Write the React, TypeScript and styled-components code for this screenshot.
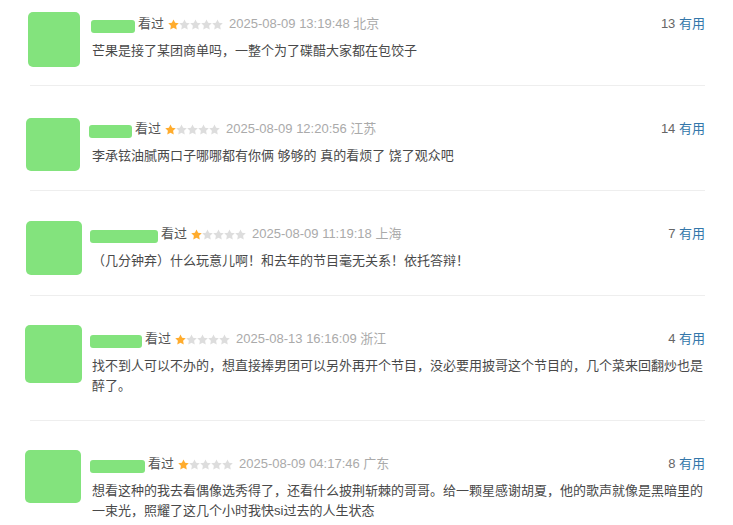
import React from "react";
import styled, { createGlobalStyle } from "styled-components";

const GlobalStyle = createGlobalStyle`
  html, body { margin: 0; padding: 0; background: #fff; }
  body {
    font-family: "Liberation Sans", "Noto Sans CJK SC", sans-serif;
    font-size: 13px;
    color: #494949;
  }
`;

const Page = styled.div`
  padding: 0 28px 0 26px;
`;

const Item = styled.div<{ $first?: boolean }>`
  display: flex;
  align-items: flex-start;
  padding-top: ${(p) => (p.$first ? "14px" : "33px")};
`;

const AvatarSlot = styled.div`
  width: 66px;
  flex-shrink: 0;
`;

const Avatar = styled.div<{ $w: number; $h: number; $dx: number; $dy: number }>`
  width: ${(p) => p.$w}px;
  height: ${(p) => p.$h}px;
  margin-left: ${(p) => p.$dx}px;
  margin-top: ${(p) => p.$dy}px;
  background: #83e37d;
  border-radius: 5px;
`;

const Content = styled.div`
  flex: 1;
  min-width: 0;
  padding-bottom: 24px;
`;

const Header = styled.div`
  display: flex;
  align-items: center;
  height: 20px;
  line-height: 20px;
  white-space: nowrap;
`;

const NameBox = styled.div<{ $w: number; $dx: number }>`
  width: ${(p) => p.$w}px;
  height: 13px;
  margin-left: ${(p) => p.$dx}px;
  margin-right: 3px;
  margin-top: 5px;
  background: #83e37d;
  border-radius: 3px;
  flex-shrink: 0;
`;

const Watched = styled.span`
  color: #555;
`;

const Stars = styled.span`
  display: inline-flex;
  margin-left: 4px;
  margin-right: 6px;
`;

const Time = styled.span`
  color: #aaa;
`;

const Votes = styled.span`
  margin-left: auto;
  color: #666;
`;

const Useful = styled.span`
  color: #3377aa;
`;

const Comment = styled.p`
  margin: 7px 0 0;
  line-height: 20px;
  color: #494949;
`;

const Divider = styled.div`
  height: 1px;
  background: #eeeeee;
  margin-left: 4px;
`;

const Star = ({ on }: { on: boolean }) => (
  <svg width="11" height="11" viewBox="1 1 22 21">
    <path
      d="M12 1.5l3.2 6.6 7.3 1-5.3 5.1 1.3 7.2L12 18l-6.5 3.4 1.3-7.2L1.5 9.1l7.3-1z"
      fill={on ? "#ffac2d" : "#dddddd"}
    />
  </svg>
);

type Review = {
  nameW: number;
  nameDx: number;
  av: { w: number; h: number; dx: number; dy: number };
  time: string;
  place: string;
  votes: number;
  text: string;
};

const reviews: Review[] = [
  {
    nameW: 44,
    nameDx: -1,
    av: { w: 52, h: 55, dx: 2, dy: -2 },
    time: "2025-08-09 13:19:48",
    place: "北京",
    votes: 13,
    text: "芒果是接了某团商单吗，一整个为了碟醋大家都在包饺子",
  },
  {
    nameW: 43,
    nameDx: -3,
    av: { w: 54, h: 53, dx: 0, dy: -1 },
    time: "2025-08-09 12:20:56",
    place: "江苏",
    votes: 14,
    text: "李承铉油腻两口子哪哪都有你俩 够够的 真的看烦了 饶了观众吧",
  },
  {
    nameW: 68,
    nameDx: -2,
    av: { w: 56, h: 54, dx: 0, dy: -3 },
    time: "2025-08-09 11:19:18",
    place: "上海",
    votes: 7,
    text: "（几分钟弃）什么玩意儿啊！和去年的节目毫无关系！依托答辩！",
  },
  {
    nameW: 52,
    nameDx: -2,
    av: { w: 57, h: 58, dx: -1, dy: -4 },
    time: "2025-08-13 16:16:09",
    place: "浙江",
    votes: 4,
    text: "找不到人可以不办的，想直接捧男团可以另外再开个节目，没必要用披哥这个节目的，几个菜来回翻炒也是醉了。",
  },
  {
    nameW: 55,
    nameDx: -2,
    av: { w: 56, h: 53, dx: -1, dy: -4 },
    time: "2025-08-09 04:17:46",
    place: "广东",
    votes: 8,
    text: "想看这种的我去看偶像选秀得了，还看什么披荆斩棘的哥哥。给一颗星感谢胡夏，他的歌声就像是黑暗里的一束光，照耀了这几个小时我快si过去的人生状态",
  },
];

export default function App() {
  return (
    <>
      <GlobalStyle />
      <Page>
        {reviews.map((r, i) => (
          <React.Fragment key={i}>
            <Item $first={i === 0}>
              <AvatarSlot>
                <Avatar $w={r.av.w} $h={r.av.h} $dx={r.av.dx} $dy={r.av.dy} />
              </AvatarSlot>
              <Content>
                <Header>
                  <NameBox $w={r.nameW} $dx={r.nameDx} />
                  <Watched>看过</Watched>
                  <Stars>
                    {[0, 1, 2, 3, 4].map((s) => (
                      <Star key={s} on={s === 0} />
                    ))}
                  </Stars>
                  <Time>
                    {r.time} {r.place}
                  </Time>
                  <Votes>
                    {r.votes} <Useful>有用</Useful>
                  </Votes>
                </Header>
                <Comment>{r.text}</Comment>
              </Content>
            </Item>
            {i < reviews.length - 1 && <Divider />}
          </React.Fragment>
        ))}
      </Page>
    </>
  );
}
